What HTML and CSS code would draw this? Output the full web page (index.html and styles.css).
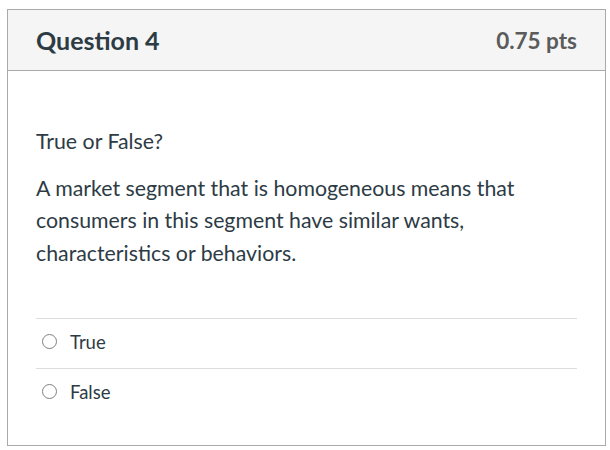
FILE: index.html
```html
<!DOCTYPE html>
<html>
<head>
<meta charset="utf-8">
<link rel="stylesheet" href="styles.css">
</head>
<body>
<div class="question">
  <div class="header">
    <h2 class="title">Question 4</h2>
    <div class="pts">0.75 pts</div>
  </div>
  <div class="content">
    <div class="text">
      <p>True or False?</p>
      <p>A market segment that is homogeneous means that consumers in this segment have similar wants, characteristics or behaviors.</p>
    </div>
    <div class="answers">
      <label class="answer"><span class="radio"></span><span class="label">True</span></label>
      <label class="answer"><span class="radio"></span><span class="label">False</span></label>
    </div>
  </div>
</div>
</body>
</html>
```

FILE: styles.css
```css
html, body {
  margin: 0;
  padding: 0;
  background: #fff;
}
body {
  padding: 9px 4px 0 7px;
  font-family: Lato, "Liberation Sans", sans-serif;
  color: #2d3b45;
}
.question {
  border: 1px solid #aaaaaa;
  height: 435px;
  box-sizing: content-box;
}
.header {
  display: flex;
  justify-content: space-between;
  align-items: center;
  height: 60px;
  padding: 0 28px;
  background: #f5f5f5;
  border-bottom: 1px solid #aaaaaa;
}
.title {
  margin: 0;
  font-size: 25px;
  font-weight: 700;
  color: #2d3b45;
}
.pts {
  font-size: 22.5px;
  font-weight: 700;
  color: #5b5b5b;
}
.content {
  padding: 54px 28px 0 28px;
}
.text {
  font-size: 21.3px;
  line-height: 32.5px;
}
.text p {
  margin: 0 0 14px 0;
}
.answers {
  margin-top: 49px;
}
.answer {
  display: flex;
  align-items: center;
  gap: 13px;
  padding-bottom: 4px;
  box-sizing: border-box;
  height: 50px;
  border-top: 1px solid #dddddd;
  padding-left: 6px;
  font-size: 18.5px;
}
.radio {
  width: 15px;
  height: 15px;
  box-sizing: border-box;
  border: 1px solid #808080;
  border-radius: 50%;
  background: #fff;
}
.label {
  color: #2d3b45;
}
```
